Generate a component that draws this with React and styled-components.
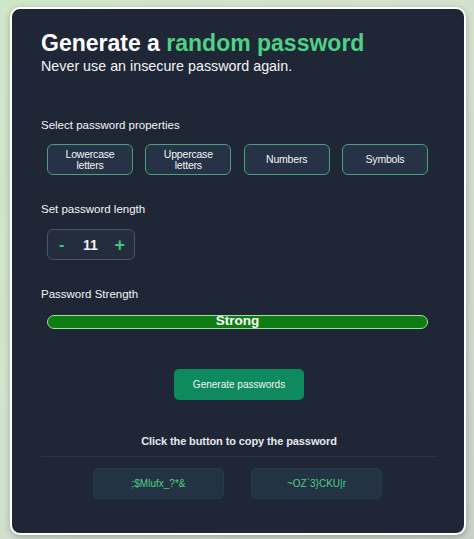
import React from "react";
import styled, { createGlobalStyle } from "styled-components";

const Global = createGlobalStyle`
  html, body { margin: 0; padding: 0; }
  body {
    width: 474px;
    height: 539px;
    background: linear-gradient(135deg, #cfe6c8 0%, #d3e2cf 45%, #c9d0c7 100%);
    font-family: "Liberation Sans", Arial, sans-serif;
    overflow: hidden;
  }
`;

const Page = styled.div`
  padding: 7px 8px 4px 10px;
`;

const Card = styled.div`
  box-sizing: border-box;
  width: 456px;
  height: 528px;
  background: #1f2736;
  border: 2px solid #ffffff;
  border-radius: 10px;
  box-shadow: 0 2px 6px rgba(0, 0, 0, 0.25);
  padding: 20px 27px 0 29px;
  display: flex;
  flex-direction: column;
  color: #ffffff;
`;

const Title = styled.h1`
  margin: 0;
  font-size: 23px;
  font-weight: 700;
  line-height: 28px;
  color: #ffffff;
`;

const Accent = styled.span`
  color: #4ed183;
`;

const Subtitle = styled.p`
  margin: 0;
  font-size: 14.3px;
  line-height: 18px;
  color: #f3f4f6;
`;

const Label = styled.div`
  margin-top: ${(p) => p.$mt}px;
  font-size: 11.5px;
  line-height: 14px;
  color: #f3f4f6;
`;

const Indent = styled.div`
  padding-left: 6px;
  padding-right: 9px;
  margin-top: ${(p) => p.$mt}px;
`;

const OptionRow = styled.div`
  display: grid;
  grid-template-columns: repeat(4, 86px);
  justify-content: space-between;
`;

const Option = styled.button`
  box-sizing: border-box;
  height: 31px;
  background: #263246;
  border: 1.5px solid #4f9e80;
  border-radius: 6px;
  color: #f3f4f6;
  font-family: inherit;
  font-size: 10.5px;
  letter-spacing: -0.2px;
  line-height: 10.5px;
  padding: 0 6px;
  display: flex;
  align-items: center;
  justify-content: center;
  text-align: center;
`;

const Counter = styled.div`
  box-sizing: border-box;
  width: 88px;
  height: 31px;
  border: 1.5px solid #4b5565;
  border-radius: 6px;
  background: #242d3d;
  display: flex;
  align-items: center;
  justify-content: space-between;
  padding: 0 9px 0 11px;
`;

const Step = styled.span`
  color: #3ec77a;
  font-size: ${(p) => p.$size}px;
  font-weight: 700;
  line-height: 1;
`;

const Value = styled.span`
  color: #f3f4f6;
  font-size: 14px;
  font-weight: 700;
  padding-left: 2px;
`;

const Bar = styled.div`
  box-sizing: border-box;
  height: 14px;
  background: #0f7d14;
  border: 1.5px solid #9be39a;
  border-radius: 8px;
  display: flex;
  align-items: center;
  justify-content: center;
  color: #ffffff;
  font-size: 13.5px;
  font-weight: 700;
  line-height: 10px;
`;

const BarText = styled.span`
  transform: translateY(-1px);
`;

const GenerateWrap = styled.div`
  display: flex;
  justify-content: center;
  margin-top: 40px;
`;

const Generate = styled.button`
  width: 130px;
  height: 31px;
  background: #0e8a5e;
  border: none;
  border-radius: 5px;
  color: #f3f4f6;
  font-family: inherit;
  font-size: 10px;
`;

const CopyTitle = styled.div`
  margin-top: 34px;
  text-align: center;
  font-size: 11px;
  font-weight: 700;
  letter-spacing: -0.1px;
  color: #e5e7eb;
  line-height: 14px;
`;

const Divider = styled.hr`
  margin: 8px 0 0 0;
  border: none;
  border-top: 1px solid #2a3444;
  width: 396px;
`;

const Passwords = styled.div`
  margin-top: 11px;
  display: flex;
  justify-content: center;
  gap: 27px;
  padding-right: 3px;
`;

const Password = styled.button`
  width: 131px;
  height: 31px;
  background: #233344;
  border: 1px solid #263a48;
  border-radius: 5px;
  color: #4ed183;
  font-family: inherit;
  font-size: 10px;
`;

export default function App() {
  const options = [
    ["Lowercase", "letters"],
    ["Uppercase", "letters"],
    ["Numbers"],
    ["Symbols"],
  ];
  return (
    <>
      <Global />
      <Page>
        <Card>
          <Title>
            Generate a <Accent>random password</Accent>
          </Title>
          <Subtitle>Never use an insecure password again.</Subtitle>

          <Label $mt={43}>Select password properties</Label>
          <Indent $mt={12}>
            <OptionRow>
              {options.map((o) => (
                <Option key={o[0]}>
                  <span>
                    {o[0]}
                    {o[1] && <br />}
                    {o[1]}
                  </span>
                </Option>
              ))}
            </OptionRow>
          </Indent>

          <Label $mt={27}>Set password length</Label>
          <Indent $mt={13}>
            <Counter>
              <Step $size={16}>-</Step>
              <Value>11</Value>
              <Step $size={18}>+</Step>
            </Counter>
          </Indent>

          <Label $mt={27}>Password Strength</Label>
          <Indent $mt={14}>
            <Bar>
              <BarText>Strong</BarText>
            </Bar>
          </Indent>

          <GenerateWrap>
            <Generate>Generate passwords</Generate>
          </GenerateWrap>

          <CopyTitle>Click the button to copy the password</CopyTitle>
          <Divider />
          <Passwords>
            <Password>;$Mlufx_?*&amp;</Password>
            <Password>~OZ`3}CKU|r</Password>
          </Passwords>
        </Card>
      </Page>
    </>
  );
}
